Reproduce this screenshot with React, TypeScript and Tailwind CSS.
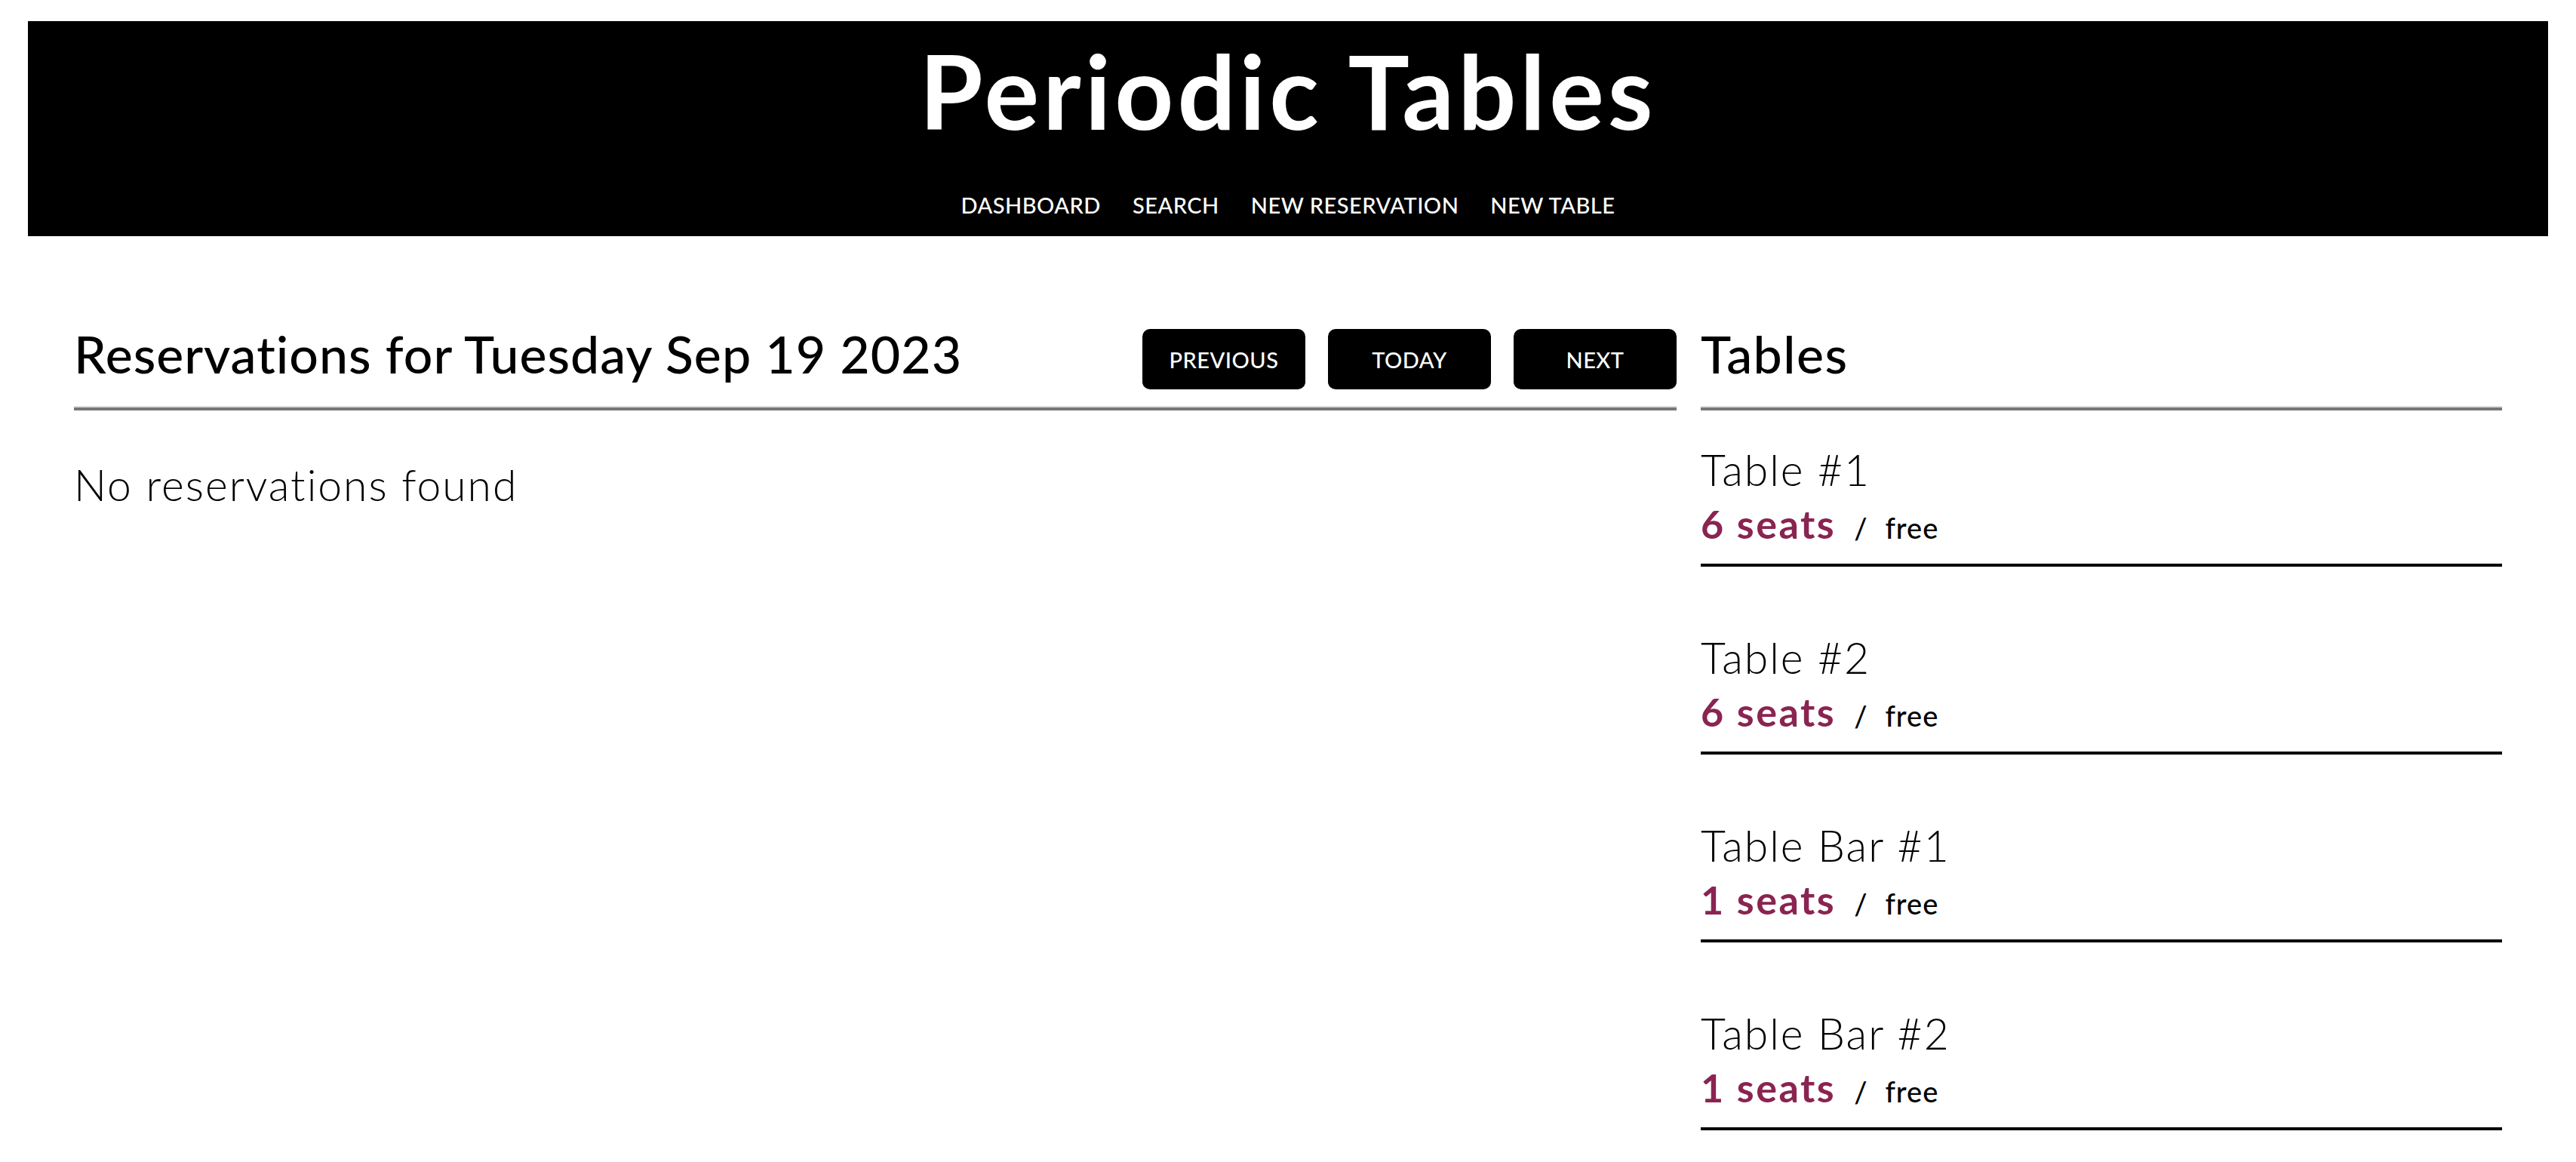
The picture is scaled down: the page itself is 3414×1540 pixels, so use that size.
import clsx from "clsx";

const NAV_LINKS = ["Dashboard", "Search", "New Reservation", "New Table"];

const TABLES = [
  { name: "Table #1", capacity: 6, status: "free" },
  { name: "Table #2", capacity: 6, status: "free" },
  { name: "Table Bar #1", capacity: 1, status: "free" },
  { name: "Table Bar #2", capacity: 1, status: "free" },
];

function Rule() {
  return (
    <div className="mt-[22px]">
      <div className="h-[2px] bg-[#dcdcdc]" />
      <div className="h-[4px] bg-[#777777]" />
    </div>
  );
}

function NavButton({ label }: { label: string }) {
  return (
    <button
      type="button"
      className="w-[216px] h-[80px] rounded-[10px] bg-black text-white text-[29px] font-medium uppercase leading-none tracking-[0.5px]"
    >
      {label}
    </button>
  );
}

function TableItem({
  name,
  capacity,
  status,
}: {
  name: string;
  capacity: number;
  status: string;
}) {
  return (
    <li className="pt-[50px] border-b-4 border-black">
      <h3 className="text-[57px] font-light leading-none tracking-[2px]">{name}</h3>
      <p className="mt-[17px] pb-[27px] flex items-baseline leading-none">
        <span className="text-[52px] font-bold text-[#8a2451] tracking-[2.5px]">
          {capacity} seats
        </span>
        <span className="ml-[24px] text-[38px] font-medium">/</span>
        <span className="ml-[24px] text-[38px] font-medium tracking-[1px]">
          {status}
        </span>
      </p>
    </li>
  );
}

export default function App() {
  return (
    <div className="min-h-screen bg-white text-black font-['Lato',sans-serif] px-[37px] pt-[28px]">
      <header className="bg-black text-white flex flex-col items-center pt-[24px] pb-[27px]">
        <h1 className="text-[136px] font-bold leading-none tracking-[5px]">
          Periodic Tables
        </h1>
        <nav className="mt-[69px] flex gap-[42px] text-[29px] font-medium uppercase leading-none tracking-[0.5px]">
          {NAV_LINKS.map((link) => (
            <a key={link} href="#" className="text-white">
              {link}
            </a>
          ))}
        </nav>
      </header>

      <main className="px-[61px] pt-[122px] grid grid-cols-[2fr_1fr] gap-x-[32px]">
        <section>
          <div className="flex justify-between items-start h-[81px]">
            <h2 className="text-[68px] font-medium leading-none tracking-[1px]">
              Reservations for Tuesday Sep 19 2023
            </h2>
            <div className="mt-[1px] flex gap-[30px]">
              <NavButton label="Previous" />
              <NavButton label="Today" />
              <NavButton label="Next" />
            </div>
          </div>
          <Rule />
          <p className="mt-[70px] text-[57px] font-light leading-none tracking-[2px]">
            No reservations found
          </p>
        </section>

        <section>
          <h2
            className={clsx(
              "h-[81px] text-[68px] font-medium leading-none tracking-[1.5px]",
            )}
          >
            Tables
          </h2>
          <Rule />
          <ul className="flex flex-col gap-[42px]">
            {TABLES.map((table) => (
              <TableItem key={table.name} {...table} />
            ))}
          </ul>
        </section>
      </main>
    </div>
  );
}
